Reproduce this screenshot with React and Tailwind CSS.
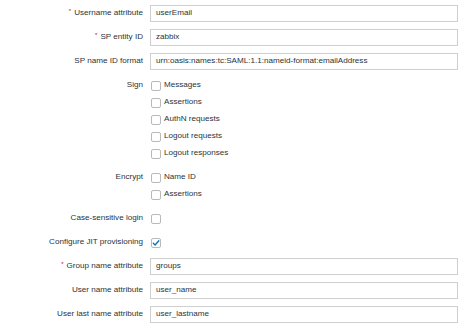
import React from "react";

const font = { fontFamily: '"Liberation Sans", Arial, sans-serif' };

function Label({ children, required }) {
  return (
    <div className="w-[143px] shrink-0 h-[17px] flex items-center justify-end text-right whitespace-nowrap text-[#2b3338]">
      {required && (
        <span className="text-[#d40000] text-[6px] leading-none self-start mt-[3px] mr-[3px]">*</span>
      )}
      <span>{children}</span>
    </div>
  );
}

function TextInput({ value }) {
  return (
    <div className="w-[308px] h-[17px] border border-[#cfcfcf] bg-white flex items-center pl-[5px] text-[#2b3338] whitespace-nowrap overflow-hidden">
      {value}
    </div>
  );
}

function Box({ checked }) {
  return (
    <div className="w-[10px] h-[10px] border border-[#b9b9b9] rounded-[2px] bg-white flex items-center justify-center ml-px">
      {checked && (
        <svg width="8" height="8" viewBox="0 0 8 8">
          <path d="M1.2 4.1 L3.1 6 L6.8 1.8" fill="none" stroke="#0a6fb0" strokeWidth="1.3" strokeLinecap="round" strokeLinejoin="round" />
        </svg>
      )}
    </div>
  );
}

function CheckLine({ label, checked }) {
  return (
    <div className="h-[17px] flex items-center gap-[3px] text-[#2b3338]">
      <Box checked={checked} />
      {label && <span className="whitespace-nowrap">{label}</span>}
    </div>
  );
}

function Row({ label, required, children }) {
  return (
    <div className="flex items-start gap-[7px]">
      <Label required={required}>{label}</Label>
      <div className="flex flex-col">{children}</div>
    </div>
  );
}

export default function App() {
  return (
    <div className="w-[474px] h-[323px] bg-white overflow-hidden text-[8.1px] leading-none" style={font}>
      <div className="flex flex-col gap-[7px] pt-[5px]">
        <Row label="Username attribute" required>
          <TextInput value="userEmail" />
        </Row>
        <Row label="SP entity ID" required>
          <TextInput value="zabbix" />
        </Row>
        <Row label="SP name ID format">
          <TextInput value="urn:oasis:names:tc:SAML:1.1:nameid-format:emailAddress" />
        </Row>
        <Row label="Sign">
          <CheckLine label="Messages" />
          <CheckLine label="Assertions" />
          <CheckLine label="AuthN requests" />
          <CheckLine label="Logout requests" />
          <CheckLine label="Logout responses" />
        </Row>
        <Row label="Encrypt">
          <CheckLine label="Name ID" />
          <CheckLine label="Assertions" />
        </Row>
        <Row label="Case-sensitive login">
          <CheckLine />
        </Row>
        <Row label="Configure JIT provisioning">
          <CheckLine checked />
        </Row>
        <Row label="Group name attribute" required>
          <TextInput value="groups" />
        </Row>
        <Row label="User name attribute">
          <TextInput value="user_name" />
        </Row>
        <Row label="User last name attribute">
          <TextInput value="user_lastname" />
        </Row>
      </div>
    </div>
  );
}
